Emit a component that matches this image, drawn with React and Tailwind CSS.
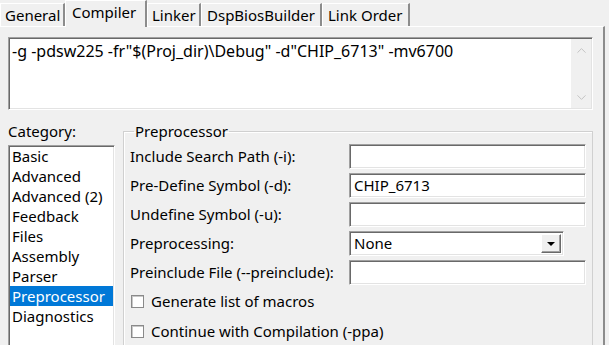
import { ChevronUp, ChevronDown } from 'lucide-react';

const TABS = [
  { label: 'General', width: 'w-[65px]', pad: 'pl-[4px]' },
  { label: 'Compiler', width: 'w-[82px]', pad: 'pl-[6px]', active: true },
  { label: 'Linker', width: 'w-[54px]', pad: 'pl-[4px]' },
  { label: 'DspBiosBuilder', width: 'w-[121px]', pad: 'pl-[5px]' },
  { label: 'Link Order', width: 'w-[88px]', pad: 'pl-[5px]' },
];

const CATEGORIES = [
  'Basic',
  'Advanced',
  'Advanced (2)',
  'Feedback',
  'Files',
  'Assembly',
  'Parser',
  'Preprocessor',
  'Diagnostics',
];

// sunken 3D edit border, classic win32 look
const SUNKEN =
  'border border-t-[#a0a0a0] border-l-[#a0a0a0] border-b-white border-r-white shadow-[inset_1px_1px_0_#696969,inset_-1px_-1px_0_#e3e3e3]';

function EditBox({ value = '', width = 'w-[237px]' }) {
  return (
    <div className={`${width} h-[25px] bg-white ${SUNKEN} flex items-center pl-[4px] leading-none`}>
      {value}
    </div>
  );
}

function ComboBox({ value }) {
  return (
    <div className={`w-[215px] h-[25px] bg-white ${SUNKEN} flex items-center p-[2px]`}>
      <span className="flex-1 pl-[2px] leading-none">{value}</span>
      <div className="w-[20px] h-full bg-[#f0f0f0] border border-t-white border-l-white border-b-[#696969] border-r-[#696969] shadow-[inset_-1px_-1px_0_#a0a0a0] flex items-center justify-center">
        <svg width="8" height="4" viewBox="0 0 8 4">
          <path d="M0 0h8L4 4z" fill="#000" />
        </svg>
      </div>
    </div>
  );
}

function CheckRow({ label }) {
  return (
    <div className="h-[30px] flex items-center gap-[7px] pl-[1px]">
      <div className="w-[13px] h-[13px] bg-white border border-[#8a8a8a] shadow-[inset_1px_1px_0_#c8c8c8]" />
      <span className="leading-none">{label}</span>
    </div>
  );
}

export default function App() {
  return (
    <div className="w-[609px] h-[345px] overflow-hidden bg-[#f0f0f0] text-[15px] text-black font-['Noto_Sans',sans-serif]">
      {/* Tab strip */}
      <div className="flex items-end h-[26px]">
        {TABS.map((t) => (
          <div
            key={t.label}
            className={`${t.width} ${t.pad} flex items-start leading-[18px] border-t border-l border-white border-r-2 border-r-[#8c8c8c] bg-[#f0f0f0] whitespace-nowrap
              ${t.active ? 'h-[27px] -mb-px relative z-10 pt-[2px]' : 'h-[23px] pt-[2px]'}`}
          >
            {t.label}
          </div>
        ))}
      </div>

      {/* Page */}
      <div className="w-[605px] h-[319px] border-t border-white border-r-2 border-r-[#8c8c8c] pl-[8px] pt-[10px]">
        {/* Options text area */}
        <div className={`w-[585px] h-[73px] bg-white ${SUNKEN} flex`}>
          <div className="flex-1 pl-[3px] pt-[3px] text-[16px] leading-[20px] whitespace-nowrap">
            -g -pdsw225 -fr"$(Proj_dir)\Debug" -d"CHIP_6713" -mv6700
          </div>
          <div className="w-[20px] mr-[1px] my-[1px] bg-[#f0f0f0] flex flex-col items-center justify-between pt-[4px] pb-[3px]">
            <ChevronUp size={15} strokeWidth={1.5} color="#c0c0c0" />
            <ChevronDown size={15} strokeWidth={1.5} color="#c0c0c0" />
          </div>
        </div>

        <div className="flex mt-[11px] gap-[8px]">
          {/* Category */}
          <div className="w-[107px] flex flex-col">
            <div className="h-[20px] leading-[20px]">Category:</div>
            <div className={`mt-[4px] h-[210px] bg-white ${SUNKEN} pl-[1px] pr-[1px]`}>
              {CATEGORIES.map((c) => (
                <div
                  key={c}
                  className={`h-[20px] leading-[20px] pl-[2px] ${c === 'Preprocessor' ? 'bg-[#0078d7] text-white' : ''}`}
                >
                  {c}
                </div>
              ))}
            </div>
          </div>

          {/* Preprocessor group */}
          <fieldset className="w-[470px] h-[240px] border border-[#d0d0d0] shadow-[inset_1px_1px_0_#ffffff] pl-[6px]">
            <legend className="ml-[4px] px-[1px] leading-[20px]">Preprocessor</legend>
            <div className="flex flex-col gap-[4px] pt-[3px]">
              <div className="flex items-center">
                <span className="w-[219px]">Include Search Path (-i):</span>
                <EditBox />
              </div>
              <div className="flex items-center">
                <span className="w-[219px]">Pre-Define Symbol (-d):</span>
                <EditBox value="CHIP_6713" />
              </div>
              <div className="flex items-center">
                <span className="w-[219px]">Undefine Symbol (-u):</span>
                <EditBox />
              </div>
              <div className="flex items-center">
                <span className="w-[219px]">Preprocessing:</span>
                <ComboBox value="None" />
              </div>
              <div className="flex items-center">
                <span className="w-[219px]">Preinclude File (--preinclude):</span>
                <EditBox />
              </div>
            </div>
            <div className="mt-[1px]">
              <CheckRow label="Generate list of macros" />
              <CheckRow label="Continue with Compilation (-ppa)" />
            </div>
          </fieldset>
        </div>
      </div>
    </div>
  );
}
